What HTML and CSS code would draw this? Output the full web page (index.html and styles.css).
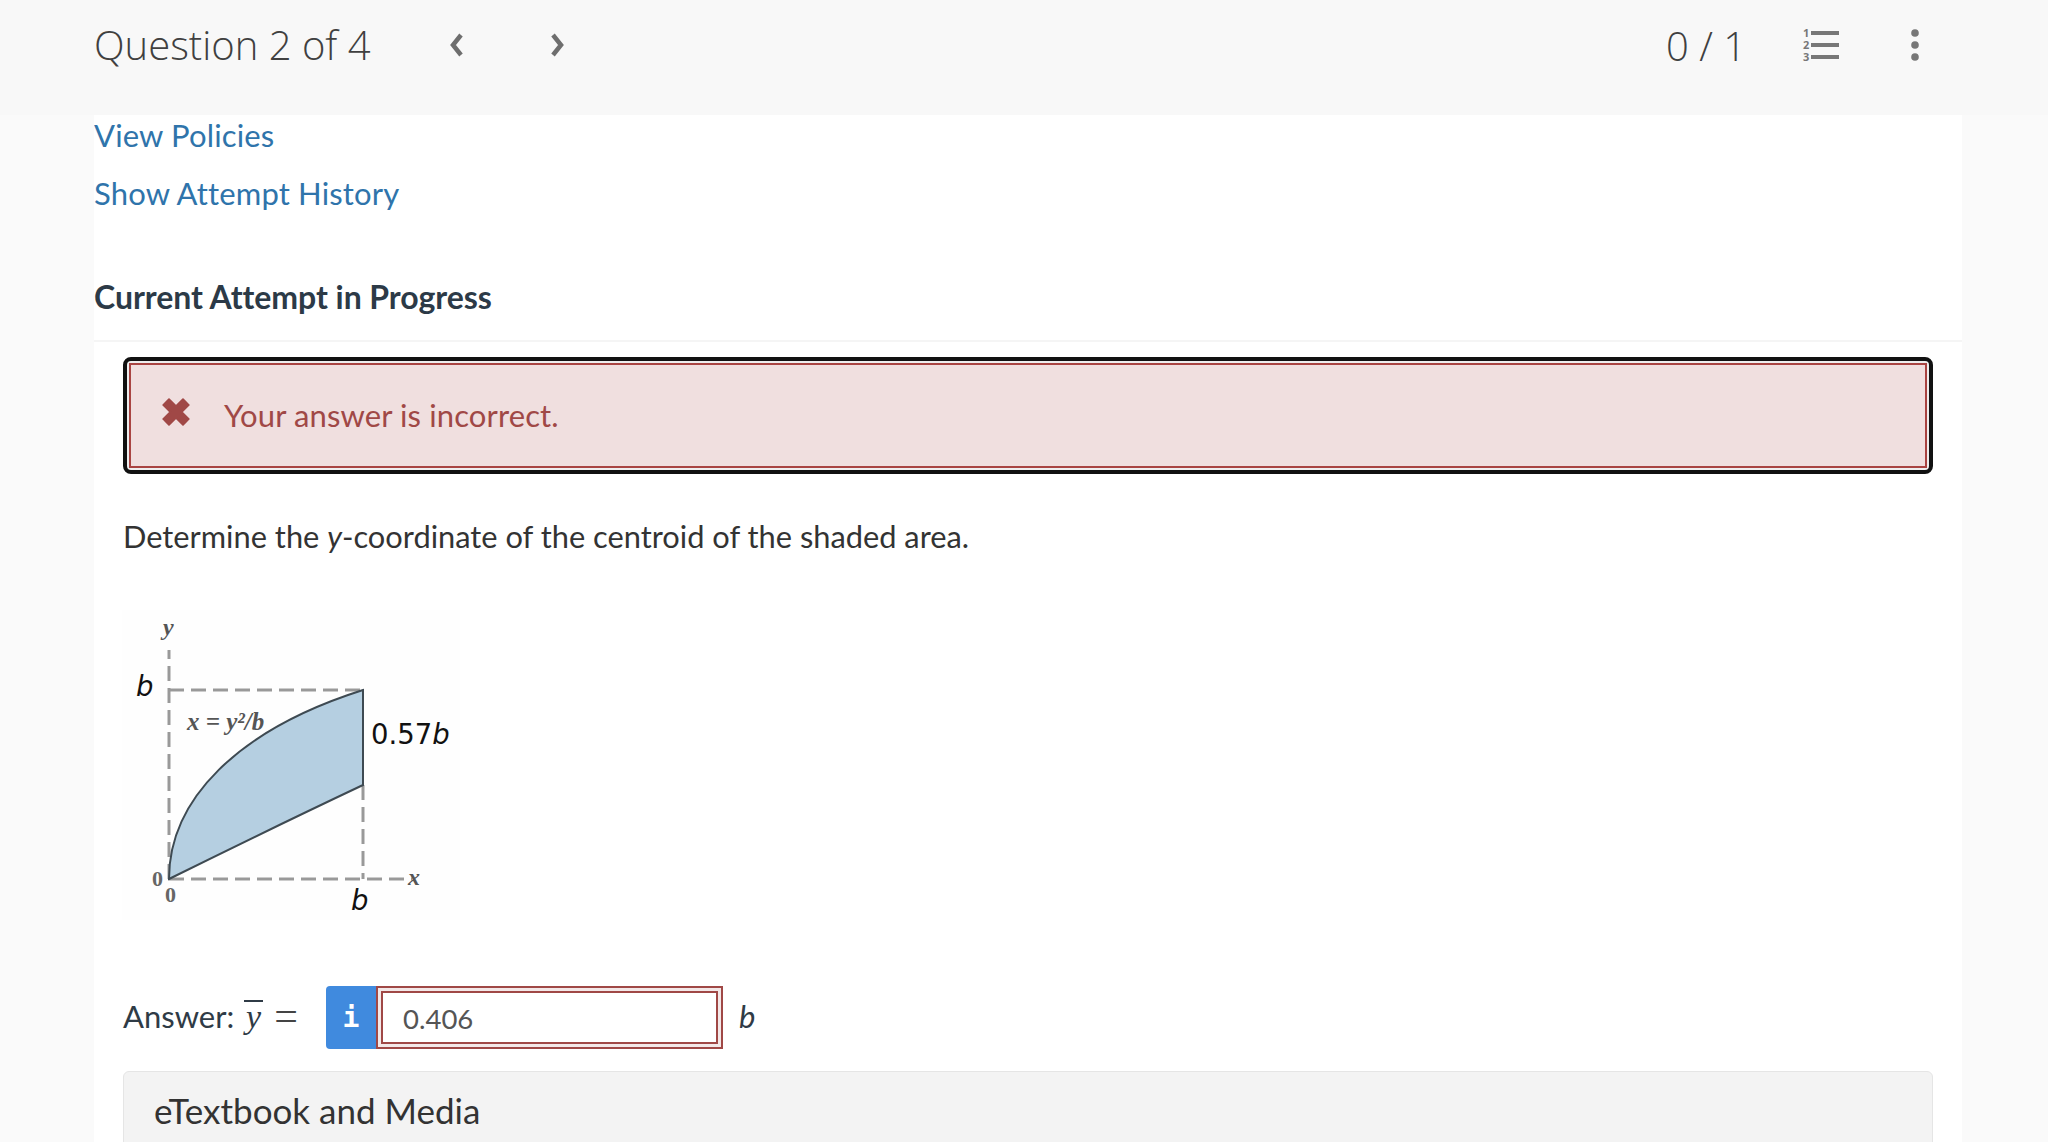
FILE: index.html
```html
<!DOCTYPE html>
<html lang="en">
<head>
<meta charset="utf-8">
<title>Question 2 of 4</title>
<link rel="stylesheet" href="styles.css">
</head>
<body>
<header class="topbar">
  <div class="topbar-left">
    <h1 class="q-title">Question 2 of 4</h1>
    <svg class="chev chev-prev" width="20" height="28" viewBox="0 0 20 28"><path d="M14 4 L6 14 L14 24"/></svg>
    <svg class="chev chev-next" width="20" height="28" viewBox="0 0 20 28"><path d="M6 4 L14 14 L6 24"/></svg>
  </div>
  <div class="topbar-right">
    <span class="score">0 / 1</span>
    <svg class="list-icon" width="38" height="36" viewBox="0 0 38 36">
      <text class="list-num" x="1" y="10">1</text>
      <text class="list-num" x="1" y="22">2</text>
      <text class="list-num" x="1" y="34">3</text>
      <rect x="9" y="4" width="28" height="4"/>
      <rect x="9" y="16" width="28" height="4"/>
      <rect x="9" y="28" width="28" height="4"/>
    </svg>
    <svg class="dots" width="10" height="34" viewBox="0 0 10 34">
      <circle cx="5" cy="5" r="3.8"/>
      <circle cx="5" cy="17" r="3.8"/>
      <circle cx="5" cy="29" r="3.8"/>
    </svg>
  </div>
</header>
<main class="sheet">
  <nav class="links">
    <a class="link" href="#">View Policies</a>
    <a class="link" href="#">Show Attempt History</a>
  </nav>
  <h2 class="attempt">Current Attempt in Progress</h2>
  <section class="question">
    <div class="alert-focus">
      <div class="alert">
        <svg class="alert-x" width="28" height="28" viewBox="3 3 24 24"><path d="M4 9 L9 4 L15 10 L21 4 L26 9 L20 15 L26 21 L21 26 L15 20 L9 26 L4 21 L10 15 Z"/></svg>
        <span>Your answer is incorrect.</span>
      </div>
    </div>
    <p class="prompt">Determine the <i>y</i>-coordinate of the centroid of the shaded area.</p>
    <svg class="figure" width="338" height="310" viewBox="0 0 338 310">
      <rect class="fig-bg" width="338" height="310"/>
      <path class="fig-dash" d="M47 269 V40 M47 80 H241 M241 175 V269 M47 269 H290"/>
      <path class="fig-shape" d="M47 269 C47 190 115 120 241 80 V175 Q150 218 47 269 Z"/>
      <text class="fig-serif fig-big" x="41" y="25">y</text>
      <text class="fig-serif fig-eq" x="65" y="120">x = y²/b</text>
      <text class="fig-serif fig-num" x="30" y="276">0</text>
      <text class="fig-serif fig-num" x="43" y="292">0</text>
      <text class="fig-serif fig-big" x="286" y="275">x</text>
      <text class="fig-label" x="14" y="86"><tspan class="fig-it">b</tspan></text>
      <text class="fig-label" x="249" y="134">0.57<tspan class="fig-it">b</tspan></text>
      <text class="fig-label" x="229" y="300"><tspan class="fig-it">b</tspan></text>
    </svg>
    <div class="answer">
      <span class="answer-label">Answer: <span class="ybar">y</span><span class="eq">=</span></span>
      <div class="input-group">
        <span class="info">i</span>
        <div class="input-outer"><div class="input-inner">0.406</div></div>
      </div>
      <i class="unit">b</i>
    </div>
    <div class="media">eTextbook and Media</div>
  </section>
</main>
</body>
</html>
```
FILE: styles.css
```css
* { box-sizing: border-box; }
html, body { margin: 0; height: 1142px; overflow: hidden; }
body { background: #fafafa; font-family: Lato, "Liberation Sans", sans-serif; color: #333; }

.topbar { height: 115px; background: #f8f8f8; display: flex; justify-content: space-between; align-items: flex-start; padding: 22px 128px 0 94px; }
.topbar-left { display: flex; align-items: center; height: 46px; }
.q-title { margin: 0; font-family: "Open Sans", sans-serif; font-size: 40px; font-weight: 300; color: #404040; width: 353px; white-space: nowrap; position: relative; top: -1px; }
.chev { fill: none; stroke: #6e6e6e; stroke-width: 4.5; }
.chev-next { margin-left: 80px; }
.topbar-right { display: flex; align-items: center; height: 46px; }
.score { font-family: "Open Sans", sans-serif; font-size: 40px; font-weight: 300; color: #404040; margin-right: 56px; }
.list-icon { fill: #777; margin-right: 70px; overflow: visible; }
.list-num { font: 700 11px "Open Sans", sans-serif; }
.dots { fill: #777; }

.sheet { width: 1868px; height: 1027px; margin-left: 94px; background: #fff; overflow: hidden; }
.links { display: flex; flex-direction: column; gap: 18px; }
.link { font-size: 31px; line-height: 40px; color: #2f74ab; text-decoration: none; letter-spacing: 0.15px; }
.attempt { margin: 0; padding: 64px 0 0; height: 129px; font-size: 32px; font-weight: 700; line-height: 40px; color: #2c3a47; letter-spacing: -0.05px; border-bottom: 2px solid #f5f5f5; }
.question { padding: 15px 29px 0; }
.alert-focus { border: 4px solid #111; border-radius: 8px; padding: 2px; background: #eee; height: 117px; }
.alert { height: 100%; display: flex; align-items: center; gap: 34px; padding: 0 0 2px 31px; border: 2px solid #a94442; background: #f0dfdf; color: #a04846; font-size: 31px; letter-spacing: 0.12px; }
.alert-x { fill: #a04846; stroke: #a04846; stroke-width: 1.5; stroke-linejoin: round; margin-top: -6px; }
.prompt { margin: 43px 0 0; font-size: 30.8px; line-height: 40px; color: #333; }
.figure { display: block; margin: 53px 0 0 -1px; }

.fig-bg { fill: #fefefe; }
.fig-dash { fill: none; stroke: #999; stroke-width: 3; stroke-dasharray: 15 7; }
.fig-shape { fill: #b5cfe1; stroke: #3e4a52; stroke-width: 2; }
.fig-serif { font: italic 700 20px "Liberation Serif", serif; fill: #555; }
.fig-big { font-size: 24px; }
.fig-eq { font-size: 25px; }
.fig-num { font-size: 22px; font-style: normal; fill: #666; }
.fig-label { font: 400 27.5px "DejaVu Sans", sans-serif; fill: #111; }
.fig-it { font-style: italic; }

.answer { display: flex; align-items: center; margin-top: 66px; height: 63px; }
.answer-label { display: flex; align-items: center; font-size: 31px; width: 203px; padding-bottom: 3px; color: #2f3b46; white-space: pre; }
.ybar { display: inline-block; width: 19px; margin-left: 2px; border-top: 2px solid #2f3b46; font: italic 34px/30px "Liberation Serif", serif; text-align: center; }
.eq { font: 42px/40px "Liberation Serif", serif; margin-left: 11px; color: #444; }
.input-group { display: flex; height: 63px; }
.info { width: 50px; background: #408ade; color: #fff; border-radius: 4px 0 0 4px; display: flex; align-items: center; justify-content: center; font: 700 28px "DejaVu Sans Mono", monospace; padding-bottom: 1px; }
.input-outer { width: 347px; border: 2px solid #a04846; padding: 3px; background: #f3e8e8; }
.input-inner { height: 100%; border: 2px solid #a04846; background: #fff; padding: 1px 0 0 20px; display: flex; align-items: center; font-size: 27.5px; color: #555; }
.unit { font-size: 31px; margin-left: 16px; padding-bottom: 3px; color: #2f3b46; }

.media { margin-top: 22px; height: 90px; padding: 16px 30px; background: #f3f3f3; border: 1px solid #e5e5e5; border-radius: 6px 6px 0 0; font-size: 35px; line-height: 44px; color: #333; }
```
